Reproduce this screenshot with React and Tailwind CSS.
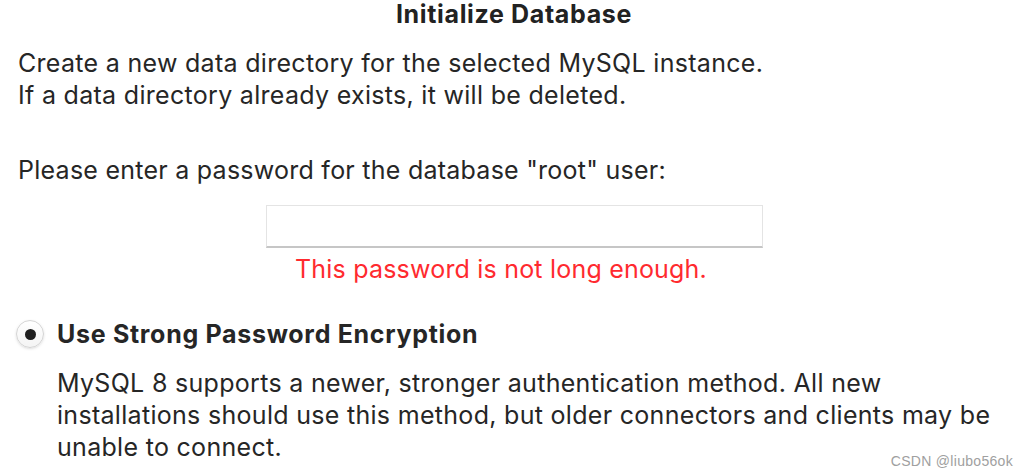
import React from 'react';

export default function App() {
  return (
    <div
      className="relative w-[1028px] h-[476px] overflow-hidden bg-white text-[#262626]"
      style={{ fontFamily: 'Inter, "Noto Sans", sans-serif' }}
    >
      {/* header */}
      <h1 className="text-center text-[25px] leading-[30px] font-bold tracking-[0.65px] text-[#222] -mt-[1px]">Initialize Database</h1>

      <div className="mt-[18px] pl-[18px] text-[25px] leading-[32px] tracking-[0.3px]">
        <p>Create a new data directory for the selected MySQL instance.</p>
        <p>If a data directory already exists, it will be deleted.</p>
      </div>

      <p className="mt-[43px] pl-[18px] text-[25px] leading-[32px] tracking-[0.25px]">
        Please enter a password for the database "root" user:
      </p>

      <div className="mt-[19px] mx-auto w-[497px] h-[43px] bg-white border border-[#e4e4e4] border-b-2 border-b-[#c6c6c6]" />

      <p className="mt-[5px] pl-[295px] text-[25px] leading-[32px] tracking-[0.2px] text-[#ff2a2f]">
        This password is not long enough.
      </p>

      {/* radio option */}
      <div className="mt-[33px] flex items-center pl-[16px]">
        <div className="flex items-center justify-center w-[28px] h-[28px] rounded-full border border-[#d4d4d4] bg-gradient-to-b from-white to-[#f4f4f4] shadow-sm">
          <div className="w-[11px] h-[11px] rounded-full bg-[#1f1f1f]" />
        </div>
        <span className="ml-[13px] text-[25px] leading-[32px] font-bold tracking-[0.7px]">Use Strong Password Encryption</span>
      </div>

      <p className="mt-[17px] pl-[57px] text-[25px] leading-[32px] tracking-[0.3px] whitespace-nowrap">
        MySQL 8 supports a newer, stronger authentication method. All new
        <br />
        installations should use this method, but older connectors and clients may be
        <br />
        unable to connect.
      </p>

      <span
        className="absolute right-[15px] bottom-[7px] text-[14px] leading-[16px] tracking-[0.3px] text-[#a0a0a0]"
        style={{ fontFamily: '"Liberation Sans", Arial, sans-serif' }}
      >
        CSDN @liubo56ok
      </span>
    </div>
  );
}
